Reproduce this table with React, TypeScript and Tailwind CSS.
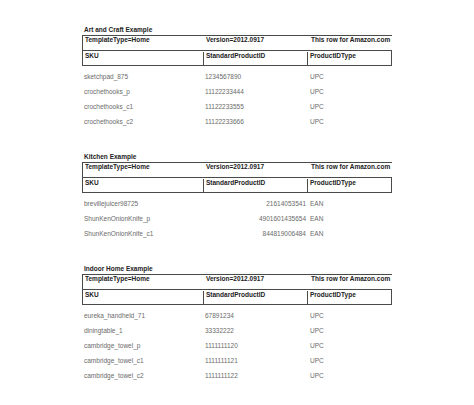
import React from 'react';

type Row = { sku: string; id: string; type: string };

const SECTIONS: { title: string; rightAlignId?: boolean; rows: Row[] }[] = [
  {
    title: 'Art and Craft Example',
    rows: [
      { sku: 'sketchpad_875', id: '1234567890', type: 'UPC' },
      { sku: 'crochethooks_p', id: '11122233444', type: 'UPC' },
      { sku: 'crochethooks_c1', id: '11122233555', type: 'UPC' },
      { sku: 'crochethooks_c2', id: '11122233666', type: 'UPC' },
    ],
  },
  {
    title: 'Kitchen Example',
    rightAlignId: true,
    rows: [
      { sku: 'brevillejuicer98725', id: '21614053541', type: 'EAN' },
      { sku: 'ShunKenOnionKnife_p', id: '4901601435654', type: 'EAN' },
      { sku: 'ShunKenOnionKnife_c1', id: '844819006484', type: 'EAN' },
    ],
  },
  {
    title: 'Indoor Home Example',
    rows: [
      { sku: 'eureka_handheld_71', id: '67891234', type: 'UPC' },
      { sku: 'diningtable_1', id: '33332222', type: 'UPC' },
      { sku: 'cambridge_towel_p', id: '1111111120', type: 'UPC' },
      { sku: 'cambridge_towel_c1', id: '1111111121', type: 'UPC' },
      { sku: 'cambridge_towel_c2', id: '1111111122', type: 'UPC' },
    ],
  },
];

function Section({ title, rows, rightAlignId }: { title: string; rows: Row[]; rightAlignId?: boolean }) {
  return (
    <div className="flex flex-col">
      <div className="h-[11px] leading-[11px] pl-[2px] font-bold text-[#222]">{title}</div>

      {/* Header table */}
      <div className="w-[310px] border-l border-t border-[#4a4a4a]">
        <div className="grid grid-cols-[121px_104px_85px] h-[14px] leading-[8px] font-bold text-[#222]">
          <div className="pl-[2px]">TemplateType=Home</div>
          <div className="pl-[2px]">Version=2012.0917</div>
          <div className="pl-[3px]">This row for Amazon.com</div>
        </div>
        <div className="grid grid-cols-[121px_104px_85px] h-[16px] leading-[8px] pt-px font-bold text-[#222] border-t border-b border-r border-[#4a4a4a]">
          <div className="pl-[2px] border-r border-[#4a4a4a]">SKU</div>
          <div className="pl-[2px] border-r border-[#4a4a4a]">StandardProductID</div>
          <div className="pl-[2px]">ProductIDType</div>
        </div>
      </div>

      {/* Data rows */}
      <div className="mt-[3px] flex flex-col text-[#6a6a6a]">
        {rows.map((r) => (
          <div key={r.sku} className="grid grid-cols-[121px_104px_85px] h-[15px] leading-[15px]">
            <div className="pl-[2px]">{r.sku}</div>
            <div className={rightAlignId ? 'pr-[1px] text-right' : 'pl-[2px]'}>{r.id}</div>
            <div className="pl-[3px]">{r.type}</div>
          </div>
        ))}
      </div>
    </div>
  );
}

export default function App() {
  return (
    <div
      className="w-[474px] h-[405px] bg-white pl-[82px] pt-[24px] flex flex-col gap-[22px] text-[6.5px] overflow-hidden"
      style={{ fontFamily: '"Liberation Sans", Arial, sans-serif' }}
    >
      {SECTIONS.map((s) => (
        <Section key={s.title} title={s.title} rows={s.rows} rightAlignId={s.rightAlignId} />
      ))}
    </div>
  );
}
